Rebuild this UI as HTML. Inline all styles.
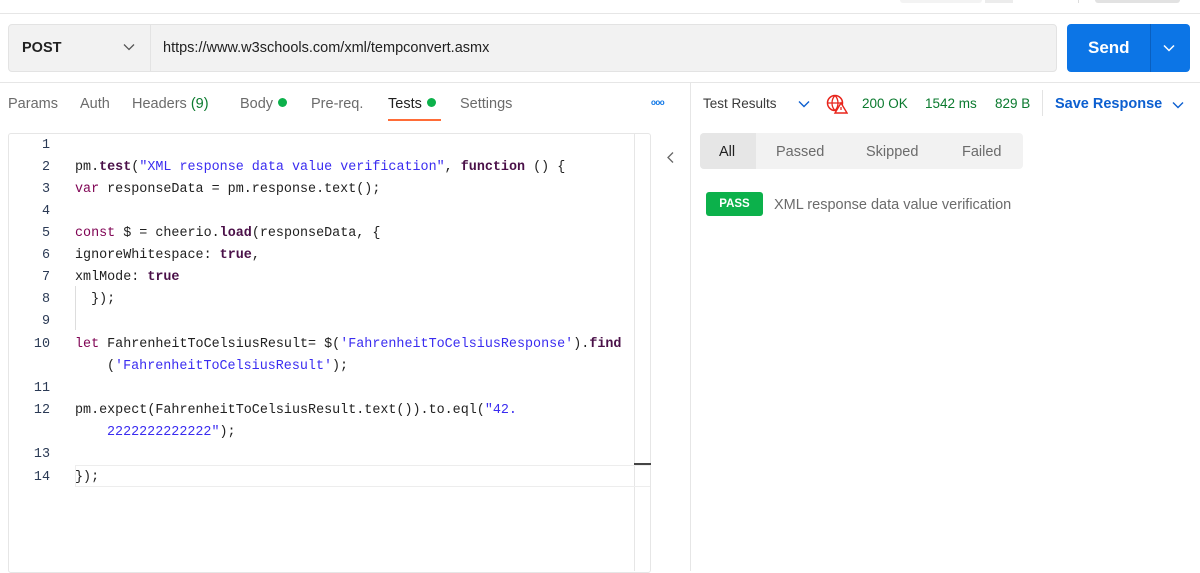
<!DOCTYPE html>
<html><head><style>
*{box-sizing:border-box;margin:0;padding:0}
body{width:1200px;height:571px;background:#fff;font-family:"Liberation Sans",sans-serif;position:relative;overflow:hidden;color:#212121}
.a{position:absolute}
.code{font-family:"Liberation Mono",monospace;font-size:13.4px;color:#212121;white-space:pre}
.ln{position:absolute;width:50px;text-align:right;left:0;font-family:"Liberation Mono",monospace;font-size:13.4px;color:#2b3a55}
.kw{color:#800555}.st{color:#3a2cf0}.b{font-weight:bold;color:#4a1048}.fn{color:#4a1048;font-weight:bold}
.tab{position:absolute;top:96px;font-size:14.5px;color:#6b6b6b}
.dot{display:inline-block;width:9px;height:9px;border-radius:50%;background:#0cb14b;margin-left:5px;vertical-align:1px}
</style></head><body>
<div class="a" style="left:0;top:13px;width:1200px;height:1px;background:#e6e6e6"></div>
<div class="a" style="left:900px;top:0;width:82px;height:3px;background:#f3f3f3;border-radius:0 0 3px 3px"></div>
<div class="a" style="left:985px;top:0;width:28px;height:3px;background:#ececec"></div>
<div class="a" style="left:1078px;top:0;width:1px;height:3px;background:#ddd"></div>
<div class="a" style="left:1095px;top:0;width:85px;height:3px;background:#e2e2e2;border-radius:0 0 3px 3px"></div>
<div class="a" style="left:8px;top:24px;width:1049px;height:48px;background:#f2f2f2;border:1px solid #e3e3e3;border-radius:4px"></div>
<div class="a" style="left:150px;top:25px;width:1px;height:46px;background:#e3e3e3"></div>
<div class="a" style="left:22px;top:40px;font-size:14.5px;font-weight:bold;color:#212121">POST</div>
<svg class="a" style="left:123px;top:43px" width="12" height="8"><path d="M1 1.5l5 5 5-5" fill="none" stroke="#555" stroke-width="1.3"/></svg>
<div class="a" style="left:163px;top:40px;font-size:14.5px;color:#212121">https://www.w3schools.com/xml/tempconvert.asmx</div>
<div class="a" style="left:1067px;top:24px;width:123px;height:48px;background:#0c75e6;border-radius:4px"></div>
<div class="a" style="left:1150px;top:24px;width:1px;height:48px;background:#0a5fbf"></div>
<div class="a" style="left:1088px;top:38px;font-size:17px;font-weight:bold;color:#fff">Send</div>
<svg class="a" style="left:1163px;top:44px" width="12" height="8"><path d="M1 1.5l5 5 5-5" fill="none" stroke="#fff" stroke-width="1.5"/></svg>
<div class="a" style="left:0;top:82px;width:1200px;height:1px;background:#e6e6e6"></div>
<div class="a" style="left:690px;top:83px;width:1px;height:488px;background:#e6e6e6"></div>
<div class="tab" style="left:8px">Params</div>
<div class="tab" style="left:80px">Auth</div>
<div class="tab" style="left:132px">Headers <span style="color:#0a7a2e">(9)</span></div>
<div class="tab" style="left:240px">Body<span class="dot"></span></div>
<div class="tab" style="left:311px">Pre-req.</div>
<div class="tab" style="left:388px;color:#212121">Tests<span class="dot"></span></div>
<div class="a" style="left:388px;top:119px;width:53px;height:2px;background:#ff6c37"></div>
<div class="tab" style="left:460px">Settings</div>
<div class="a" style="left:651px;top:98px;font-size:8px;font-weight:bold;color:#0c75e6;letter-spacing:-0.5px">ooo</div>
<div class="a" style="left:8px;top:133px;width:643px;height:440px;border:1px solid #e6e6e6;border-radius:3px"></div>
<div class="a" style="left:634px;top:133px;width:1px;height:438px;background:#e6e6e6"></div>
<div class="a" style="left:634px;top:463px;width:17px;height:2px;background:#444"></div>
<div class="a" style="left:75px;top:465px;width:575px;height:22px;border:1px solid #ededed;border-right:none"></div>
<div class="a" style="left:75px;top:286px;width:1px;height:44px;background:#ddd"></div>
<div class="ln" style="top:138px">1</div>
<div class="ln" style="top:160px">2</div>
<div class="ln" style="top:182px">3</div>
<div class="ln" style="top:204px">4</div>
<div class="ln" style="top:226px">5</div>
<div class="ln" style="top:248px">6</div>
<div class="ln" style="top:270px">7</div>
<div class="ln" style="top:292px">8</div>
<div class="ln" style="top:314px">9</div>
<div class="ln" style="top:337px">10</div>
<div class="ln" style="top:381px">11</div>
<div class="ln" style="top:403px">12</div>
<div class="ln" style="top:447px">13</div>
<div class="ln" style="top:470px">14</div>
<div class="a code" style="left:75px;top:160px">pm.<span class="b">test</span>(<span class="st">"XML response data value verification"</span>, <span class="fn">function</span> () {</div>
<div class="a code" style="left:75px;top:182px"><span class="kw">var</span> responseData = pm.response.text();</div>
<div class="a code" style="left:75px;top:226px"><span class="kw">const</span> $ = cheerio.<span class="b">load</span>(responseData, {</div>
<div class="a code" style="left:75px;top:248px">ignoreWhitespace: <span class="b">true</span>,</div>
<div class="a code" style="left:75px;top:270px">xmlMode: <span class="b">true</span></div>
<div class="a code" style="left:75px;top:292px">  });</div>
<div class="a code" style="left:75px;top:337px"><span class="kw">let</span> FahrenheitToCelsiusResult= $(<span class="st">'FahrenheitToCelsiusResponse'</span>).<span class="b">find</span></div>
<div class="a code" style="left:107px;top:359px">(<span class="st">'FahrenheitToCelsiusResult'</span>);</div>
<div class="a code" style="left:75px;top:403px">pm.expect(FahrenheitToCelsiusResult.text()).to.eql(<span class="st">"42.</span></div>
<div class="a code" style="left:107px;top:425px"><span class="st">2222222222222"</span>);</div>
<div class="a code" style="left:75px;top:470px">});</div>
<svg class="a" style="left:666px;top:151px" width="10" height="13"><path d="M7 1.5L2 6.5l5 5" fill="none" stroke="#666" stroke-width="1.3"/></svg>
<div class="a" style="left:703px;top:96px;font-size:13.5px;color:#3a3a3a">Test Results</div>
<svg class="a" style="left:798px;top:100px" width="12" height="8"><path d="M1 1.5l5 5 5-5" fill="none" stroke="#0c5fd0" stroke-width="1.4"/></svg>
<svg class="a" style="left:826px;top:94px" width="22" height="20"><circle cx="9" cy="9" r="7.5" fill="none" stroke="#e8251c" stroke-width="1.5"/><path d="M1.5 9h15M9 1.5c-4 4-4 11 0 15M9 1.5c4 4 4 11 0 15" fill="none" stroke="#e8251c" stroke-width="1.3"/><path d="M15 9l6 10h-12z" fill="#fff" stroke="#e8251c" stroke-width="1.4"/><path d="M15 13v3" stroke="#e8251c" stroke-width="1.3"/></svg>
<div class="a" style="left:862px;top:96px;font-size:13.5px;color:#0a7a2e">200 OK</div>
<div class="a" style="left:925px;top:96px;font-size:13.5px;color:#0a7a2e">1542 ms</div>
<div class="a" style="left:995px;top:96px;font-size:13.5px;color:#0a7a2e">829 B</div>
<div class="a" style="left:1042px;top:90px;width:1px;height:26px;background:#e3e3e3"></div>
<div class="a" style="left:1055px;top:96px;font-size:14.5px;font-weight:bold;color:#0c5fd0">Save Response</div>
<svg class="a" style="left:1172px;top:101px" width="12" height="8"><path d="M1 1.5l5 5 5-5" fill="none" stroke="#0c5fd0" stroke-width="1.4"/></svg>
<div class="a" style="left:700px;top:133px;width:323px;height:36px;background:#f2f2f2;border-radius:4px"></div>
<div class="a" style="left:700px;top:133px;width:56px;height:36px;background:#e6e6e6;border-radius:4px 0 0 4px"></div>
<div class="a" style="left:719px;top:144px;font-size:14.5px;color:#212121">All</div>
<div class="a" style="left:776px;top:144px;font-size:14.5px;color:#6b6b6b">Passed</div>
<div class="a" style="left:866px;top:144px;font-size:14.5px;color:#6b6b6b">Skipped</div>
<div class="a" style="left:962px;top:144px;font-size:14.5px;color:#6b6b6b">Failed</div>
<div class="a" style="left:706px;top:192px;width:57px;height:24px;background:#0cb14b;border-radius:3px;color:#fff;font-size:11.5px;font-weight:bold;text-align:center;line-height:24px">PASS</div>
<div class="a" style="left:774px;top:197px;font-size:14.5px;color:#6b6b6b">XML response data value verification</div>
</body></html>
